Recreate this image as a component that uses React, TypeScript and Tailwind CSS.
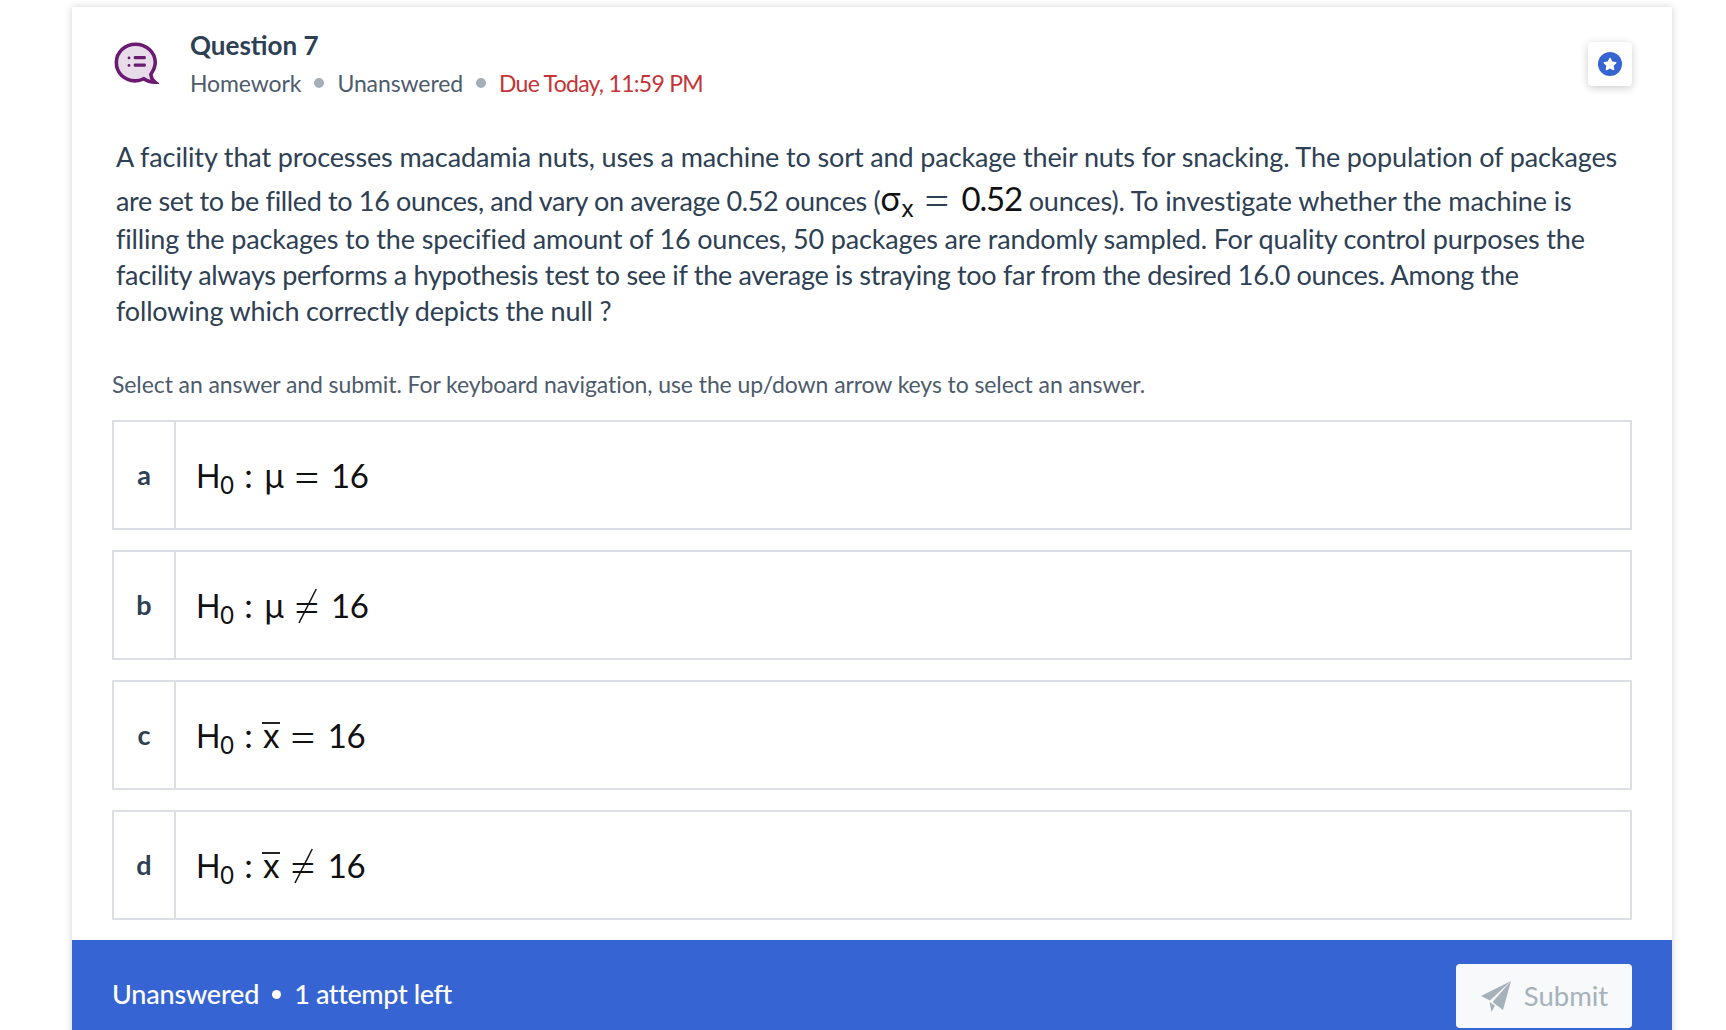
import React, { ReactNode } from 'react';
import { FaStar } from 'react-icons/fa';

const mathFont = "font-['Inter','DejaVu_Sans',sans-serif]";
const digitFont = "font-['Lato','DejaVu_Sans',sans-serif]";

const Equals: React.FC<{ crossed?: boolean }> = ({ crossed }) => (
  <span className="relative mx-[12px] inline-block translate-y-[3px] scale-x-[1.15] font-['Liberation_Serif',serif] text-[38px] font-light leading-none">
    =
    {crossed && (
      <svg className="absolute left-[1px] top-[-2px] h-[38px] w-[20px]" viewBox="0 0 20 38" fill="none" stroke="#111" strokeWidth="1.3">
        <path d="M18 2 L3 36" />
      </svg>
    )}
  </span>
);

const Hypothesis: React.FC<{ symbol: ReactNode; crossed?: boolean }> = ({ symbol, crossed }) => (
  <div className={`flex items-baseline text-[33px] font-normal leading-none text-[#111] ${mathFont}`}>
    <span className="text-[33px]">H</span>
    <span className="ml-[-1px] translate-y-[6px] text-[24px]">0</span>
    <span className="ml-[9px] mr-[11px]">:</span>
    {symbol}
    <Equals crossed={crossed} />
    <span className={`${digitFont} ml-[2px] tracking-[-0.3px]`}>16</span>
  </div>
);

const XBar = () => (
  <span className="ml-[-2px] inline-block border-t-2 border-[#222] pt-0 leading-[24px]">x</span>
);

const options: { letter: string; symbol: ReactNode; crossed?: boolean }[] = [
  { letter: 'a', symbol: <span>μ</span> },
  { letter: 'b', symbol: <span>μ</span>, crossed: true },
  { letter: 'c', symbol: <XBar /> },
  { letter: 'd', symbol: <XBar />, crossed: true },
];

const Dot = () => <span className="mx-[13px] h-[10px] w-[10px] rounded-full bg-[#a3b0ba]" />;

export default function App() {
  return (
    <div className="h-[1030px] overflow-hidden bg-white font-['Lato','Noto_Sans',sans-serif] text-[#2e4053]">
      <div className="ml-[72px] mt-[7px] h-[1100px] w-[1600px] bg-white shadow-[0_0_8px_rgba(0,0,0,0.18)]">
        <div className="px-[40px] pt-[20px]">
          <div className="flex items-start justify-between">
            <div className="flex">
              <svg className="ml-[2px] mt-[14px] h-[45px] w-[45px]" viewBox="0 0 48 48">
                <path
                  d="M23 3.500C11.500 3.500 2.500 12 2.500 23S11 42.500 22.500 42.500c3.400 0 6.400-.8 9.200-2.200 3.400 2.400 7.200 3.600 12 3.700-2.600-2-4-4.400-4.400-8.400C42 31.600 44 27.500 44 23 44 12 34.500 3.500 23 3.500Z"
                  fill="#e8dbea"
                  stroke="#6b1a72"
                  strokeWidth="3.800"
                />
                <rect x="14.500" y="16.500" width="3" height="3" rx="1.500" fill="#6b1a72" />
                <rect x="14.500" y="24.500" width="3" height="3" rx="1.500" fill="#6b1a72" />
                <rect x="21" y="16" width="13" height="3.500" rx="1.500" fill="#6b1a72" />
                <rect x="21" y="24" width="13" height="3.500" rx="1.500" fill="#6b1a72" />
              </svg>
              <div className="ml-[31px]">
                <div className="text-[26px] font-bold leading-[36px]">Question 7</div>
                <div className="mt-[2px] flex items-center text-[23px] leading-[36px] tracking-[-0.1px] text-[#4d5b6b]">
                  <span>Homework</span>
                  <Dot />
                  <span>Unanswered</span>
                  <Dot />
                  <span className="tracking-[-0.72px] text-[#c53336]">Due Today, 11:59 PM</span>
                </div>
              </div>
            </div>
            <button className="mt-[15px] flex h-[44px] w-[44px] items-center justify-center rounded-[4px] bg-white shadow-[0_2px_8px_rgba(0,0,0,0.2)]">
              <span className="flex h-[24px] w-[24px] items-center justify-center rounded-full bg-[#3665d3]">
                <FaStar className="h-[14px] w-[14px] text-white" />
              </span>
            </button>
          </div>

          <div className="ml-[4px] mt-[38px] whitespace-nowrap text-[27px] leading-[36px]">
            <p className="tracking-[-0.12px]">A facility that processes macadamia nuts, uses a machine to sort and package their nuts for snacking. The population of packages</p>
            <p className="mt-[4px] flex items-baseline">
              <span className="whitespace-pre tracking-[-0.35px]">are set to be filled to 16 ounces, and vary on average 0.52 ounces (</span>
              <span className={`text-[33px] text-[#111] ${mathFont}`}>σ</span>
              <span className={`translate-y-[6px] text-[24px] text-[#111] ${mathFont}`}>x</span>
              <Equals />
              <span className={`ml-[2px] text-[33px] tracking-[-1.2px] text-[#111] ${digitFont}`}>0.52</span>
              <span className="whitespace-pre tracking-[-0.12px]"> ounces). To investigate whether the machine is</span>
            </p>
            <p className="tracking-[-0.16px]">filling the packages to the specified amount of 16 ounces, 50 packages are randomly sampled. For quality control purposes the</p>
            <p className="tracking-[-0.3px]">facility always performs a hypothesis test to see if the average is straying too far from the desired 16.0 ounces. Among the</p>
            <p className="tracking-[-0.18px]">following which correctly depicts the null ?</p>
          </div>

          <p className="mt-[37px] text-[23px] leading-[36px] tracking-[-0.09px] text-[#4d5b6b]">
            Select an answer and submit. For keyboard navigation, use the up/down arrow keys to select an answer.
          </p>

          <div className="mt-[18px] flex flex-col gap-[20px]">
            {options.map((o) => (
              <div key={o.letter} className="flex h-[110px] border-2 border-[#dcdfe4]">
                <div className="flex w-[62px] items-center justify-center border-r-2 border-[#dcdfe4] text-[27px] font-bold">
                  {o.letter}
                </div>
                <div className="flex flex-1 items-center pl-[20px]">
                  <Hypothesis symbol={o.symbol} crossed={o.crossed} />
                </div>
              </div>
            ))}
          </div>
        </div>

        <div className="mt-[20px] flex h-[100px] items-start justify-between bg-[#3665d3] px-[40px] pt-[24px]">
          <div className="mt-[12px] flex items-center text-[27px] font-medium leading-[36px] tracking-[-0.2px] text-white">
            <span>Unanswered</span>
            <span className="mx-[13px] h-[9px] w-[9px] rounded-full bg-white" />
            <span className="tracking-[-0.4px]">1 attempt left</span>
          </div>
          <button className="flex h-[64px] w-[176px] items-center justify-center rounded-[4px] bg-[#f8f9fa] text-[27.5px] text-[#a6b1ba]">
            <svg className="mr-[12px] h-[32px] w-[32px]" viewBox="0 0 32 32" fill="#a6b1ba">
              <path d="M31 1 L1 16 L10 20.500 L31 1Z" />
              <path d="M31 1 L12.500 22 L23 30 L31 1Z" />
              <path d="M9.500 22 L15 25.500 L11.500 32 Z" />
            </svg>
            Submit
          </button>
        </div>
      </div>
    </div>
  );
}
